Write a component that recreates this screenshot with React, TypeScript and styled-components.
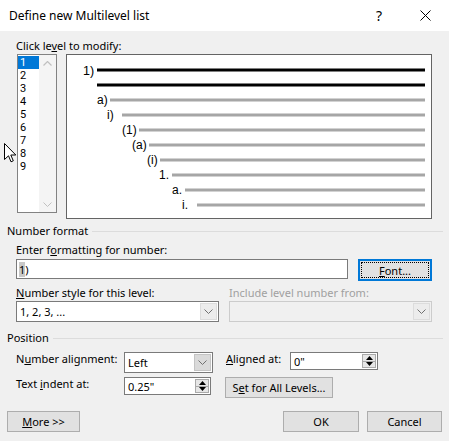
import React from 'react';
import styled, { createGlobalStyle } from 'styled-components';

const Global = createGlobalStyle`
  html, body { margin: 0; padding: 0; background: #f0f0f0; }
  body { font-family: "Noto Sans", "Segoe UI", sans-serif; font-size: 11px; color: #000; }
  * { box-sizing: border-box; }
`;

const Window = styled.div`
  position: relative;
  width: 449px;
  height: 441px;
  background: #f0f0f0;
  overflow: hidden;
  display: flex;
  flex-direction: column;
`;

const TitleBar = styled.div`
  height: 31px;
  flex: none;
  background: #fff;
  display: flex;
  align-items: center;
  padding-left: 9px;
  padding-right: 1px;
`;

const Title = styled.div`
  flex: 1;
  font-size: 12px;
`;

const CaptionButton = styled.div`
  width: 46px;
  height: 31px;
  display: flex;
  align-items: center;
  justify-content: center;
  font-size: 14px;
`;

const Body = styled.div`
  flex: 1;
  display: flex;
  flex-direction: column;
  padding: 0 6px 0 7px;
`;

const Indent = styled.div`
  padding-left: 9px;
  display: flex;
  flex-direction: column;
`;

const Label = styled.div<{ $disabled?: boolean; $mt?: number; $w?: number }>`
  line-height: 16px;
  white-space: nowrap;
  margin-top: ${(p) => p.$mt ?? 0}px;
  color: ${(p) => (p.$disabled ? '#a0a0a0' : '#000')};
  ${(p) => (p.$w ? `width: ${p.$w}px; flex: none;` : '')}
`;

const LevelRow = styled.div`
  display: flex;
  align-items: flex-start;
  gap: 9px;
  height: 165px;
  margin-left: 1px;
`;

const ListBox = styled.div`
  width: 40px;
  height: 159px;
  border: 1px solid #828282;
  background: #fff;
  display: flex;
`;

const ListItems = styled.div`
  width: 21px;
  padding-top: 1px;
  display: flex;
  flex-direction: column;
`;

const ListItem = styled.div<{ $selected?: boolean }>`
  height: 13px;
  line-height: 13px;
  padding-left: 2px;
  font-family: Roboto, "Noto Sans", sans-serif;
  font-size: 11px;
  background: ${(p) => (p.$selected ? '#0078d7' : 'transparent')};
  color: ${(p) => (p.$selected ? '#fff' : '#000')};
`;

const ScrollBar = styled.div`
  width: 17px;
  background: #f4f4f4;
  display: flex;
  flex-direction: column;
  justify-content: space-between;
  align-items: center;
  padding: 6px 0 5px;
`;

const Preview = styled.div`
  width: 366px;
  height: 165px;
  border: 1px solid #646464;
  background: #fff;
  display: flex;
`;

const GroupHeader = styled.div<{ $mt: number }>`
  display: flex;
  align-items: center;
  gap: 4px;
  margin-top: ${(p) => p.$mt}px;
  line-height: 16px;
`;

const GroupLine = styled.div`
  flex: 1;
  height: 1px;
  background: #dcdcdc;
  margin-top: 1px;
`;

const Row = styled.div<{ $gap?: number; $mt?: number }>`
  display: flex;
  align-items: flex-start;
  gap: ${(p) => p.$gap ?? 10}px;
  margin-top: ${(p) => p.$mt ?? 0}px;
`;

const TextBox = styled.div<{ $w: number; $h: number }>`
  width: ${(p) => p.$w}px;
  height: ${(p) => p.$h}px;
  border: 1px solid #7a7a7a;
  background: #fff;
  display: flex;
  align-items: center;
  padding-left: 2px;
  flex: none;
`;

const Sel = styled.span`
  background: #c8c8c8;
`;

const Button = styled.div<{ $w: number; $h?: number; $focus?: boolean; $ml?: number }>`
  width: ${(p) => p.$w}px;
  height: ${(p) => p.$h ?? 21}px;
  flex: none;
  margin-left: ${(p) => p.$ml ?? 0}px;
  background: #e1e1e1;
  border: ${(p) => (p.$focus ? '2px solid #0078d7' : '1px solid #adadad')};
  display: flex;
  align-items: center;
  justify-content: center;
  padding: ${(p) => (p.$focus ? '1px' : '0')};
`;

const FocusRing = styled.div`
  flex: 1;
  align-self: stretch;
  border: 1px dotted #000;
  display: flex;
  align-items: center;
  justify-content: center;
`;

const Select = styled.div<{ $w: number; $disabled?: boolean }>`
  width: ${(p) => p.$w}px;
  height: 21px;
  flex: none;
  border: 1px solid ${(p) => (p.$disabled ? '#cccccc' : '#7a7a7a')};
  background: ${(p) => (p.$disabled ? '#f0f0f0' : '#fff')};
  display: flex;
  align-items: stretch;
`;

const SelectText = styled.div`
  flex: 1;
  padding-left: 3px;
  display: flex;
  align-items: center;
`;

const ArrowBox = styled.div<{ $hot?: boolean }>`
  width: 17px;
  margin: 1px;
  background: ${(p) => (p.$hot ? '#dadada' : '#ececec')};
  border: 1px solid ${(p) => (p.$hot ? '#c4c4c4' : '#dcdcdc')};
  display: flex;
  align-items: center;
  justify-content: center;
`;

const Spinner = styled.div<{ $w: number }>`
  width: ${(p) => p.$w}px;
  height: 18px;
  flex: none;
  border: 1px solid #7a7a7a;
  background: #fff;
  display: flex;
  align-items: stretch;
`;

const SpinText = styled.div`
  flex: 1;
  padding-left: 3px;
  display: flex;
  align-items: center;
`;

const SpinButtons = styled.div`
  width: 15px;
  display: flex;
  flex-direction: column;
  padding: 1px 1px 1px 0;
`;

const SpinButton = styled.div`
  flex: 1;
  background: #e6e6e6;
  border: 1px solid #a9a9a9;
  display: flex;
  align-items: center;
  justify-content: center;
  & + & { border-top: none; }
`;

const PosLabel = styled.div<{ $w: number; $ml?: number }>`
  width: ${(p) => p.$w}px;
  margin-left: ${(p) => p.$ml ?? 0}px;
  flex: none;
  line-height: 14px;
  white-space: nowrap;
`;

const Footer = styled.div`
  display: flex;
  align-items: center;
  gap: 8px;
  margin-top: 13px;
  padding-right: 1px;
`;

const Spacer = styled.div`
  flex: 1;
`;

const Cursor = styled.svg`
  position: absolute;
  left: 4px;
  top: 143px;
`;

const Chevron = ({ color = '#707070' }: { color?: string }) => (
  <svg width="9" height="5" viewBox="0 0 9 5">
    <path d="M0.5 0.5 L4.5 4.5 L8.5 0.5" fill="none" stroke={color} strokeWidth="1" />
  </svg>
);

const ChevronUp = ({ color = '#c0c0c0' }: { color?: string }) => (
  <svg width="9" height="5" viewBox="0 0 9 5">
    <path d="M0.5 4.5 L4.5 0.5 L8.5 4.5" fill="none" stroke={color} strokeWidth="1.2" />
  </svg>
);

const Tri = ({ up }: { up?: boolean }) => (
  <svg width="7" height="4" viewBox="0 0 7 4">
    <path d={up ? 'M0 4 L3.5 0 L7 4 Z' : 'M0 0 L3.5 4 L7 0 Z'} fill="#000" />
  </svg>
);

const labels: { t: string; x: number }[] = [
  { t: 'a)', x: 30 },
  { t: 'i)', x: 40 },
  { t: '(1)', x: 55 },
  { t: '(a)', x: 65 },
  { t: '(i)', x: 80 },
  { t: '1.', x: 92 },
  { t: 'a.', x: 105 },
  { t: 'i.', x: 115 },
];
const starts = [43, 55, 72, 82, 93, 105, 118, 130];

const PreviewDrawing = () => (
  <svg width="364" height="163" viewBox="0 0 364 163" style={{ fontFamily: '"Liberation Sans", Arial, sans-serif' }}>
    <text x="16" y="19.5" fontSize="12.5" fill="#000">1)</text>
    <line x1="30" y1="15" x2="358" y2="15" stroke="#000" strokeWidth="3" />
    <line x1="30" y1="30" x2="358" y2="30" stroke="#000" strokeWidth="3" />
    {labels.map((l, i) => {
      const y = 45 + i * 15;
      return (
        <g key={i}>
          <text x={l.x} y={y + 4.2} fontSize="12" fill="#000">{l.t}</text>
          <line x1={starts[i]} y1={y} x2="358" y2={y} stroke="#a6a6a6" strokeWidth="3" />
        </g>
      );
    })}
  </svg>
);

export default function App() {
  return (
    <>
      <Global />
      <Window>
        <TitleBar>
          <Title>Define new Multilevel list</Title>
          <CaptionButton>?</CaptionButton>
          <CaptionButton>
            <svg width="11" height="11" viewBox="0 0 11 11">
              <path d="M0.5 0.5 L10.5 10.5 M10.5 0.5 L0.5 10.5" stroke="#000" strokeWidth="1" />
            </svg>
          </CaptionButton>
        </TitleBar>
        <Body>
          <Indent>
            <Label $mt={7}>Click le<u>v</u>el to modify:</Label>
            <LevelRow>
              <ListBox>
                <ListItems>
                  {[1, 2, 3, 4, 5, 6, 7, 8, 9].map((n) => (
                    <ListItem key={n} $selected={n === 1}>{n}</ListItem>
                  ))}
                </ListItems>
                <ScrollBar>
                  <ChevronUp />
                  <Chevron color="#c0c0c0" />
                </ScrollBar>
              </ListBox>
              <Preview>
                <PreviewDrawing />
              </Preview>
            </LevelRow>
          </Indent>

          <GroupHeader $mt={4}>
            <span>Number format</span>
            <GroupLine />
          </GroupHeader>
          <Indent>
            <Label $mt={3}>Enter f<u>o</u>rmatting for number:</Label>
            <Row $mt={1}>
              <TextBox $w={332} $h={20}><Sel>1</Sel>)</TextBox>
              <Button $w={74} $h={22} $focus>
                <FocusRing><u>F</u>ont...</FocusRing>
              </Button>
            </Row>
            <Row $mt={4}>
              <Label $w={203}><u>N</u>umber style for this level:</Label>
              <Label $disabled>Include level number from:</Label>
            </Row>
            <Row>
              <Select $w={203}>
                <SelectText>1, 2, 3, ...</SelectText>
                <ArrowBox><Chevron /></ArrowBox>
              </Select>
              <Select $w={203} $disabled>
                <SelectText />
                <ArrowBox><Chevron /></ArrowBox>
              </Select>
            </Row>
          </Indent>

          <GroupHeader $mt={8}>
            <span>Position</span>
            <GroupLine />
          </GroupHeader>
          <Indent>
            <Row $mt={6} $gap={0}>
              <PosLabel $w={108}>N<u>u</u>mber alignment:</PosLabel>
              <Select $w={89}>
                <SelectText>Left</SelectText>
                <ArrowBox $hot><Chevron /></ArrowBox>
              </Select>
              <PosLabel $w={64} $ml={13}><u>A</u>ligned at:</PosLabel>
              <Spinner $w={88}>
                <SpinText>0"</SpinText>
                <SpinButtons>
                  <SpinButton><Tri up /></SpinButton>
                  <SpinButton><Tri /></SpinButton>
                </SpinButtons>
              </Spinner>
            </Row>
            <Row $mt={4} $gap={0}>
              <PosLabel $w={108}>Text <u>i</u>ndent at:</PosLabel>
              <Spinner $w={87}>
                <SpinText>0.25"</SpinText>
                <SpinButtons>
                  <SpinButton><Tri up /></SpinButton>
                  <SpinButton><Tri /></SpinButton>
                </SpinButtons>
              </Spinner>
              <Button $w={108} $ml={14}>S<u>e</u>t for All Levels...</Button>
            </Row>
          </Indent>

          <Footer>
            <Button $w={73}><u>M</u>ore &gt;&gt;</Button>
            <Spacer />
            <Button $w={76}>OK</Button>
            <Button $w={75}>Cancel</Button>
          </Footer>
        </Body>
        <Cursor width="13" height="20" viewBox="0 0 13 20">
          <path d="M0.5 0.5 L0.5 16.5 L4.5 12.8 L7 18.8 L9.3 17.8 L6.8 12 L11.8 12 Z" fill="#fff" stroke="#000" strokeWidth="1" strokeLinejoin="miter" />
        </Cursor>
      </Window>
    </>
  );
}
